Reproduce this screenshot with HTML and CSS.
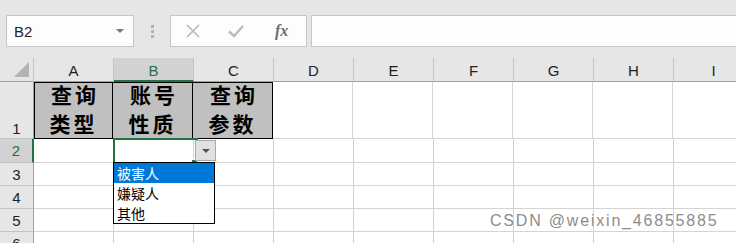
FILE: index.html
```html
<!DOCTYPE html>
<html lang="zh-CN">
<head>
  <meta charset="UTF-8" />
  <title>数据验证下拉列表</title>
  <link rel="stylesheet" href="styles.css">
</head>
<body>

  <div class="toolbar">
    <div class="namebox">
      <span>B2</span>
      <svg class="caret" width="8" height="4" viewBox="0 0 8 4"><path d="M0 0h8L4 4z" fill="#777"/></svg>
    </div>
    <div class="grip"><i></i><i></i><i></i></div>
    <div class="fbtns">
      <svg width="16" height="16" viewBox="0 0 16 16"><path d="M2 2L14 14M14 2L2 14" stroke="#b9b9b9" stroke-width="1.6"/></svg>
      <svg width="18" height="16" viewBox="0 0 18 16"><path d="M2 8.5L7 13L16 3" stroke="#bcbcbc" stroke-width="2.4" fill="none"/></svg>
      <span class="fx">fx</span>
    </div>
    <div class="finput"></div>
  </div>

  <div class="sheet">
    <div class="row head">
      <div class="corner"><svg width="16" height="15" viewBox="0 0 16 15"><path d="M15 0V15H0z" fill="#b4b4b4"/></svg></div>
      <div class="ch">A</div>
      <div class="ch on">B</div>
      <div class="ch">C</div>
      <div class="ch">D</div>
      <div class="ch">E</div>
      <div class="ch">F</div>
      <div class="ch">G</div>
      <div class="ch">H</div>
      <div class="ch">I</div>
    </div>

    <div class="row r1">
      <div class="rh">1</div>
      <div class="cell title">查询<br>类型</div>
      <div class="cell title">账号<br>性质</div>
      <div class="cell title">查询<br>参数</div>
      <div class="cell"></div><div class="cell"></div><div class="cell"></div>
      <div class="cell"></div><div class="cell"></div><div class="cell"></div>
    </div>

    <div class="row r2">
      <div class="rh on">2</div>
      <div class="cell"></div>
      <div class="cell sel">
        <div class="dd-btn"><svg width="8" height="4" viewBox="0 0 8 4"><path d="M0 0h8L4 4z" fill="#555"/></svg></div>
        <ul class="dd-list">
          <li class="hl">被害人</li>
          <li>嫌疑人</li>
          <li>其他</li>
        </ul>
      </div>
      <div class="cell"></div><div class="cell"></div><div class="cell"></div>
      <div class="cell"></div><div class="cell"></div><div class="cell"></div><div class="cell"></div>
    </div>

    <div class="row">
      <div class="rh">3</div>
      <div class="cell"></div><div class="cell"></div><div class="cell"></div>
      <div class="cell"></div><div class="cell"></div><div class="cell"></div>
      <div class="cell"></div><div class="cell"></div><div class="cell"></div>
    </div>
    <div class="row">
      <div class="rh">4</div>
      <div class="cell"></div><div class="cell"></div><div class="cell"></div>
      <div class="cell"></div><div class="cell"></div><div class="cell"></div>
      <div class="cell"></div><div class="cell"></div><div class="cell"></div>
    </div>
    <div class="row">
      <div class="rh">5</div>
      <div class="cell"></div><div class="cell"></div><div class="cell"></div>
      <div class="cell"></div><div class="cell"></div><div class="cell"></div>
      <div class="cell"></div><div class="cell"></div><div class="cell"></div>
    </div>
    <div class="row">
      <div class="rh">6</div>
      <div class="cell"></div><div class="cell"></div><div class="cell"></div>
      <div class="cell"></div><div class="cell"></div><div class="cell"></div>
      <div class="cell"></div><div class="cell"></div><div class="cell"></div>
    </div>
  </div>

  <div class="watermark">CSDN @weixin_46855885</div>

</body>
</html>
```

FILE: styles.css
```css
* {
  box-sizing: border-box;
}

body {
  margin: 0;
  width: 736px;
  height: 243px;
  overflow: hidden;
  position: relative;
  background: #e6e6e6;
  font-family: "Liberation Sans", Arial, "Noto Sans CJK SC", sans-serif;
}

/* formula bar */
.toolbar {
  height: 58px;
  padding-top: 15px;
  display: flex;
  align-items: flex-start;
}

.namebox {
  margin-left: 6px;
  width: 128px;
  height: 32px;
  background: #fdfdfd;
  border: 1px solid #c6c6c6;
  display: flex;
  align-items: center;
  justify-content: space-between;
  padding: 0 9px 0 7px;
  font-size: 15px;
  color: #222;
}

.grip {
  margin-left: 17px;
  width: 4px;
  height: 32px;
  display: flex;
  flex-direction: column;
  justify-content: center;
  gap: 2px;
}

.grip i {
  display: block;
  width: 3px;
  height: 3px;
  background: #b1b1b1;
}

.fbtns {
  margin-left: 15px;
  width: 137px;
  height: 32px;
  background: #fdfdfd;
  border: 1px solid #c6c6c6;
  display: flex;
  align-items: center;
  padding-left: 14px;
  gap: 26px;
}

.fx {
  font-family: "Liberation Serif", serif;
  font-style: italic;
  font-weight: bold;
  font-size: 16px;
  color: #6e6e6e;
  margin-left: 4px;
}

.finput {
  margin-left: 4px;
  flex: 1;
  height: 32px;
  background: #fdfdfd;
  border: 1px solid #c6c6c6;
  border-right: none;
}

/* sheet grid */
.sheet {
  width: 754px;
}

.row {
  display: flex;
  height: 23px;
}

.row.head { height: 24px; }
.row.r1 { height: 57px; }
.row.r2 { height: 24px; }

.corner, .ch, .rh {
  background: #e6e6e6;
  color: #222;
  font-size: 15px;
}

.corner {
  width: 34px;
  border-right: 1px solid #c4c4c4;
  border-bottom: 1px solid #9f9f9f;
  display: flex;
  align-items: flex-end;
  justify-content: flex-end;
  padding: 0 3px 4px 0;
}

.ch {
  width: 80px;
  border-right: 1px solid #c4c4c4;
  border-bottom: 1px solid #9f9f9f;
  display: flex;
  align-items: center;
  justify-content: center;
  padding-top: 2px;
}

.ch.on {
  background: #d2d2d2;
  color: #217346;
  border-bottom: 2px solid #217346;
}

.rh {
  width: 34px;
  border-right: 1px solid #9f9f9f;
  border-bottom: 1px solid #c4c4c4;
  display: flex;
  align-items: center;
  justify-content: center;
}

.r1 .rh {
  align-items: flex-end;
  padding-bottom: 1px;
}

.rh.on {
  background: #d2d2d2;
  color: #217346;
  border-right: 2px solid #217346;
}

.cell {
  width: 80px;
  flex-shrink: 0;
  background: #fff;
  border-right: 1px solid #d4d4d4;
  border-bottom: 1px solid #d4d4d4;
}

.cell.title {
  background: #c0c0c0;
  border-right: 1px solid #000;
  border-bottom: 1px solid #000;
  font-family: "Noto Sans CJK SC", sans-serif;
  font-weight: bold;
  font-size: 21px;
  line-height: 29px;
  letter-spacing: 3px;
  text-indent: 3px;
  color: #000;
  text-align: center;
  display: flex;
  align-items: flex-end;
  justify-content: center;
}

.r1 .cell:nth-child(2) {
  border-left: 1px solid #000;
  width: 79px;
}

.r1 .cell.title {
  border-top: 1px solid #000;
}

/* active cell + validation dropdown */
.cell.sel {
  position: relative;
}

.cell.sel::before {
  content: "";
  position: absolute;
  left: -1px;
  top: -1px;
  width: 81px;
  height: 25px;
  border: 2px solid #217346;
}

.cell.sel::after {
  content: "";
  position: absolute;
  left: 77px;
  top: 20px;
  width: 5px;
  height: 5px;
  background: #217346;
  border: 1px solid #fff;
}

.dd-btn {
  position: absolute;
  left: 81px;
  top: 1px;
  width: 21px;
  height: 21px;
  background: #e1e1e1;
  border: 1px solid #a8a8a8;
  display: flex;
  align-items: center;
  justify-content: center;
  z-index: 2;
}

.dd-list {
  position: absolute;
  left: -1px;
  top: 23px;
  width: 102px;
  margin: 0;
  padding: 0;
  list-style: none;
  background: #fff;
  border: 1px solid #000;
  z-index: 3;
  font-family: "Noto Sans CJK SC", sans-serif;
  font-size: 14px;
  color: #000;
}

.dd-list li {
  height: 20px;
  line-height: 20px;
  padding-left: 3px;
}

.dd-list li.hl {
  background: #0078d7;
  color: #fff;
}

.watermark {
  position: absolute;
  left: 490px;
  top: 212px;
  font-family: "Liberation Sans", Arial, sans-serif;
  font-size: 16px;
  letter-spacing: 1.8px;
  color: #8c8c8c;
  text-shadow: 0 0 1px #fff, 0 0 1px #fff;
}
```
